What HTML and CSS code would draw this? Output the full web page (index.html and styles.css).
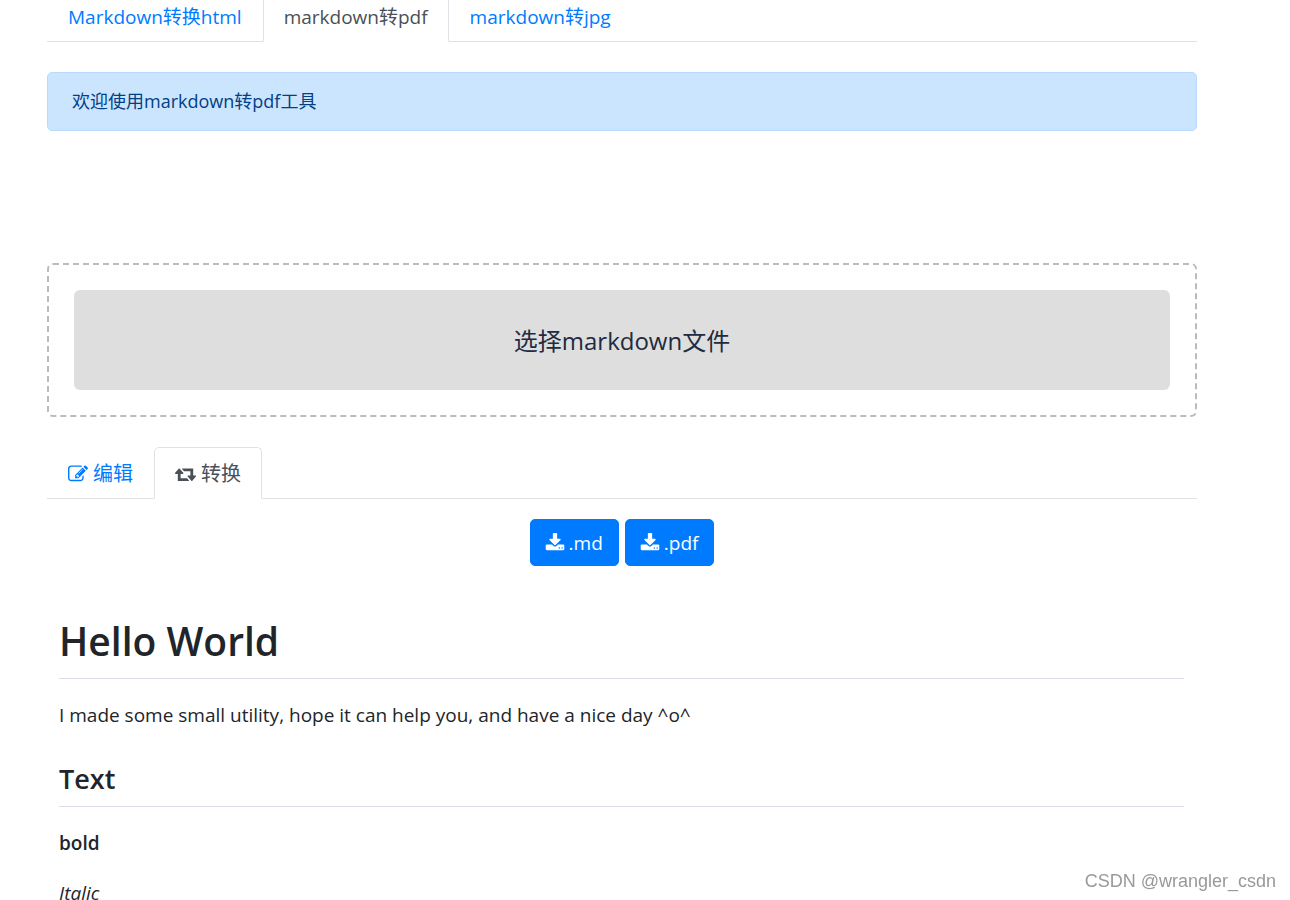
FILE: index.html
```
<!DOCTYPE html>
<html lang="zh-CN">
<head>
    <meta charset="UTF-8">
    <meta name="viewport" content="width=device-width, initial-scale=1.0">
    <title>markdown转pdf</title>
    <link rel="stylesheet" href="styles.css">
</head>
<body>
    <main class="container">
        <nav class="tabs tabs-top">
            <a class="tab" href="#html">Markdown转换html</a>
            <a class="tab active" href="#pdf">markdown转pdf</a>
            <a class="tab" href="#jpg">markdown转jpg</a>
        </nav>

        <div class="alert">欢迎使用markdown转pdf工具</div>

        <div class="upload">
            <label class="upload-label" for="md-file">选择markdown文件</label>
            <input class="upload-input" type="file" id="md-file" accept=".md">
        </div>

        <nav class="tabs tabs-editor">
            <a class="tab" href="#edit">
                <svg class="icon" viewBox="0 0 1792 1792" aria-hidden="true"><path d="M888 1184l116-116-152-152-116 116v56h96v96h56zm440-720q-16-16-33 1l-350 350q-17 17-1 33t33-1l350-350q17-17 1-33zm80 594v190q0 119-84.5 203.5t-203.5 84.5h-832q-119 0-203.5-84.5t-84.5-203.5v-832q0-119 84.5-203.5t203.5-84.5h832q63 0 117 25 15 7 18 23 3 17-9 29l-49 49q-14 14-32 8-23-6-45-6h-832q-66 0-113 47t-47 113v832q0 66 47 113t113 47h832q66 0 113-47t47-113v-126q0-13 9-22l64-64q15-15 35-7t20 29zm-96-738l288 288-672 672h-288v-288zm444 132l-92 92-288-288 92-92q28-28 68-28t68 28l152 152q28 28 28 68t-28 68z"/></svg>
                编辑
            </a>
            <a class="tab active" href="#convert">
                <svg class="icon icon-wide" viewBox="0 0 1920 1792" aria-hidden="true"><path d="M1280 1504q0 13-9.500 22.500t-22.500 9.500h-960q-8 0-13.500-2t-9-7-5.500-8-3-11.500-1-11.500v-600h-192q-26 0-45-19t-19-45q0-24 15-41l320-384q19-22 49-22t49 22l320 384q15 17 15 41 0 26-19 45t-45 19h-192v384h576q16 0 25 11l160 192q7 10 7 21zm640-416q0 24-15 41l-320 384q-20 23-49 23t-49-23l-320-384q-15-17-15-41 0-26 19-45t45-19h192v-384h-576q-16 0-25-12l-160-192q-7-9-7-20 0-13 9.500-22.500t22.500-9.500h960q8 0 13.500 2t9 7 5.500 8 3 11.500 1 11.500v600h192q26 0 45 19t19 45z"/></svg>
                转换
            </a>
        </nav>

        <div class="downloads">
            <button class="btn" type="button">
                <svg class="icon" viewBox="0 0 1792 1792" aria-hidden="true"><path d="M1344 1344q0-26-19-45t-45-19-45 19-19 45 19 45 45 19 45-19 19-45zm256 0q0-26-19-45t-45-19-45 19-19 45 19 45 45 19 45-19 19-45zm128-224v320q0 40-28 68t-68 28h-1472q-40 0-68-28t-28-68v-320q0-40 28-68t68-28h465l135 136q58 56 136 56t136-56l136-136h464q40 0 68 28t28 68zm-325-569q17 41-14 70l-448 448q-18 19-45 19t-45-19l-448-448q-31-29-14-70 17-39 59-39h256v-448q0-26 19-45t45-19h256q26 0 45 19t19 45v448h256q42 0 59 39z"/></svg>
                .md
            </button>
            <button class="btn" type="button">
                <svg class="icon" viewBox="0 0 1792 1792" aria-hidden="true"><path d="M1344 1344q0-26-19-45t-45-19-45 19-19 45 19 45 45 19 45-19 19-45zm256 0q0-26-19-45t-45-19-45 19-19 45 19 45 45 19 45-19 19-45zm128-224v320q0 40-28 68t-68 28h-1472q-40 0-68-28t-28-68v-320q0-40 28-68t68-28h465l135 136q58 56 136 56t136-56l136-136h464q40 0 68 28t28 68zm-325-569q17 41-14 70l-448 448q-18 19-45 19t-45-19l-448-448q-31-29-14-70 17-39 59-39h256v-448q0-26 19-45t45-19h256q26 0 45 19t19 45v448h256q42 0 59 39z"/></svg>
                .pdf
            </button>
        </div>

        <article class="preview">
            <h1>Hello World</h1>
            <p>I made some small utility, hope it can help you, and have a nice day ^o^</p>
            <h2>Text</h2>
            <p><strong>bold</strong></p>
            <p><em>Italic</em></p>
        </article>
    </main>

    <div class="watermark">CSDN @wrangler_csdn</div>
</body>
</html>
```

FILE: styles.css
```
:root {
    --primary-color: #007bff;
    --text-color: #212529;
    --border-color: #dee2e6;
}

* {
    box-sizing: border-box;
}

body {
    margin: 0;
    height: 100vh;
    overflow: hidden;
    background-color: #fff;
    color: var(--text-color);
    font-family: "Open Sans", "Noto Sans CJK SC", sans-serif;
    font-size: 19px;
    line-height: 30px;
}

.container {
    padding: 0 93px 0 47px;
}

.tabs {
    display: flex;
    border-bottom: 1px solid var(--border-color);
}

.tab {
    display: flex;
    align-items: center;
    gap: 5px;
    margin-bottom: -1px;
    padding: 11px 20px 9px;
    border: 1px solid transparent;
    border-radius: 5px 5px 0 0;
    color: var(--primary-color);
    text-decoration: none;
}

.tab.active {
    border-color: var(--border-color);
    border-bottom-color: #fff;
    background-color: #fff;
    color: #495057;
}

.tabs-top .tab {
    padding-top: 2px;
    border-top: 0;
    border-radius: 0;
}

.tabs-editor .tab {
    font-size: 20px;
}

.icon {
    width: 20px;
    height: 20px;
    fill: currentColor;
}

.icon-wide {
    width: 21px;
}

.alert {
    margin-top: 30px;
    padding: 14px 24px;
    border: 1px solid #b8daff;
    border-radius: 5px;
    background-color: #cce5ff;
    color: #004085;
    font-size: 18px;
    line-height: 29px;
}

.upload {
    position: relative;
    margin: 132px 0 30px;
    padding: 25px;
    border: 2px dashed #bbb;
    border-radius: 6px;
}

.upload-label {
    display: block;
    padding: 31px 30px 29px;
    border-radius: 6px;
    background-color: #dedede;
    color: #212b40;
    font-size: 24px;
    line-height: 40px;
    text-align: center;
    cursor: pointer;
}

.upload-input {
    position: absolute;
    width: 1px;
    height: 1px;
    opacity: 0;
}

.downloads {
    display: flex;
    justify-content: center;
    gap: 6px;
    margin-top: 20px;
}

.btn {
    display: flex;
    align-items: center;
    gap: 4px;
    padding: 9px 15px 8px 14px;
    border: 1px solid var(--primary-color);
    border-radius: 5px;
    background-color: var(--primary-color);
    color: #fff;
    font: inherit;
    line-height: 28px;
    cursor: pointer;
}

.preview {
    padding: 50px 13px 0 12px;
}

.preview h1,
.preview h2 {
    margin: 0 0 21px;
    border-bottom: 1px solid #d8dee4;
    font-weight: 600;
}

.preview h1 {
    padding-bottom: 12px;
    font-size: 39px;
    line-height: 50px;
}

.preview h2 {
    margin-top: 30px;
    padding-bottom: 9px;
    font-size: 27px;
    line-height: 37px;
}

.preview p {
    margin: 0 0 20px;
}

.preview strong {
    font-weight: 600;
}

.watermark {
    position: fixed;
    right: 14px;
    bottom: 4px;
    color: #999;
    font-family: "Liberation Sans", Arial, sans-serif;
    font-size: 18px;
}
```
